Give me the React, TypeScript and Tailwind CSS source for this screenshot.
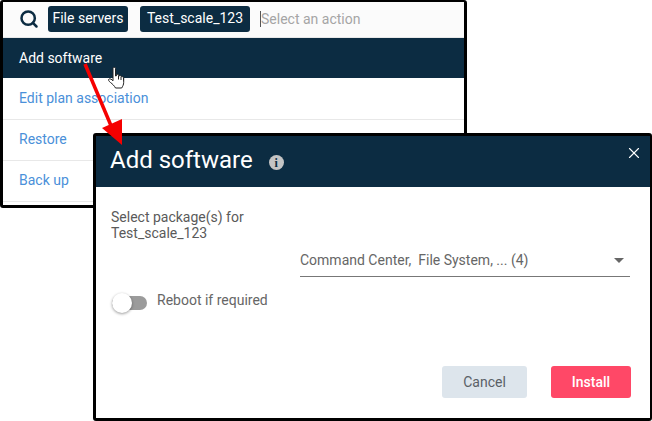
import React from 'react';
import { Search, X } from 'lucide-react';

const actions = ['Edit plan association', 'Restore', 'Back up'];

function Chip({ label, width }: { label: string; width: string }) {
  return (
    <span className={`flex h-[26px] items-center justify-center rounded-[3px] bg-[#0c2c42] text-[14px] text-white ${width}`}>
      {label}
    </span>
  );
}

/* Action picker behind the dialog */
function ActionMenu() {
  return (
    <div className="h-[208px] w-[467px] rounded-[3px] border-[3px] border-t-2 border-black bg-white">
      <div className="flex h-[36px] items-center border-b border-[#e8e8e8] bg-[#fbfbfb] pb-[2px] pl-[16px]">
        <Search className="h-[20px] w-[20px] text-[#0c2c42]" strokeWidth={3} />
        <div className="ml-[9px] flex items-center gap-[12px]">
          <Chip label="File servers" width="w-[80px]" />
          <Chip label="Test_scale_123" width="w-[110px]" />
        </div>
        <span className="ml-[10px] border-l border-[#555] text-[14px] leading-[16px] text-[#a5a5a5]">Select an action</span>
      </div>
      <div className="flex h-[40px] items-center bg-[#0c2c42] pl-[16px] text-[14px] text-white">Add software</div>
      {actions.map((action, i) => (
        <div
          key={action}
          className={i === 0
            ? 'flex h-[42px] items-center border-b border-[#e8e8e8] pl-[16px] text-[14px] text-[#4a90d9]'
            : 'flex h-[41px] items-center border-b border-[#e8e8e8] pb-[2px] pl-[16px] text-[14px] text-[#4a90d9]'}
        >
          {action}
        </div>
      ))}
    </div>
  );
}

function Toggle() {
  return (
    <div className="relative ml-px mt-[4px] h-[14px] w-[35px] rounded-full bg-[#9b9b9b]">
      <div className="absolute left-0 top-[-3px] h-[20px] w-[20px] rounded-full bg-white shadow-[0_1px_3px_rgba(0,0,0,0.4)]" />
    </div>
  );
}

/* Add software dialog */
function AddSoftwareDialog() {
  return (
    <div className="absolute left-[93px] top-[133px] flex h-[288px] w-[559px] flex-col rounded-[3px] border-[3px] border-r-2 border-black bg-white">
      <div className="flex h-[51px] shrink-0 items-center bg-[#0c2c42] pl-[14px] pr-[7px] text-white">
        <h2 className="mb-[4px] text-[24px] font-normal">Add software</h2>
        <span className="ml-[16px] mt-[2px] flex h-[15px] w-[15px] items-center justify-center rounded-full bg-[#c4c4c4] font-['Liberation_Serif',serif] text-[12px] font-bold text-[#0c2c42]">i</span>
        <X className="ml-auto mt-[8px] h-[18px] w-[18px] self-start" strokeWidth={1.5} />
      </div>

      <div className="flex flex-1 flex-col px-[15px]">
        <p className="mt-[22px] text-[14px] leading-[16px] text-[#5a5a5a]">
          Select package(s) for
          <br />
          Test_scale_123
        </p>
        <div className="ml-[189px] mt-[9px] flex h-[27px] w-[330px] items-center justify-between border-b border-[#777] pb-[5px] text-[14px] text-[#666]">
          <span className="whitespace-pre">Command Center,  File System, ... (4)</span>
          <span className="mr-[6px] h-0 w-0 border-x-[5px] border-t-[5px] border-x-transparent border-t-[#666]" />
        </div>
        <div className="mt-[13px] flex items-center gap-[10px] text-[14px] text-[#666]">
          <Toggle />
          <span>Reboot if required</span>
        </div>
        <div className="mt-[55px] flex justify-end gap-[24px] pr-[4px]">
          <button className="h-[32px] w-[85px] rounded-[3px] bg-[#dde5ec] text-[14px] text-[#5a6066]">Cancel</button>
          <button className="h-[32px] w-[80px] rounded-[3px] bg-[#ff4867] text-[14px] font-medium text-white">Install</button>
        </div>
      </div>
    </div>
  );
}

export default function App() {
  return (
    <div className="relative h-[421px] w-[652px] overflow-hidden bg-white font-['Roboto',sans-serif]">
      <ActionMenu />
      <AddSoftwareDialog />

      {/* Hand cursor */}
      <svg className="absolute left-[107px] top-[66px]" width="20" height="25" viewBox="0 0 20 25">
        <path
          d="M6 2.5c0-1.6 2.5-1.6 2.5 0V10l1-.3V9c0-1 2-1 2.2.2l.1.8.9-.3c.9-.2 1.6.3 1.7 1.1l.7-.1c1-.1 1.6.6 1.6 1.6v4c0 2.400-1 4-2 5.700H8.500C7.500 20 5.500 18 3.500 16.500 1.500 15 1 13.500 2 13c1.200-.6 2.700.4 4 1.800z"
          fill="#fff"
          stroke="#222"
          strokeWidth="1"
          strokeLinejoin="round"
        />
        <path d="M11.500 10v3.500M14 11v3M16.500 12v2.500" fill="none" stroke="#222" strokeWidth="1" />
      </svg>

      {/* Red callout arrow */}
      <svg className="absolute left-[80px] top-[60px]" width="50" height="90" viewBox="0 0 50 90">
        <line x1="5" y1="4" x2="32" y2="68" stroke="#f50000" strokeWidth="3.500" />
        <polygon points="22,68 42,59 42,85" fill="#f50000" />
      </svg>
    </div>
  );
}
